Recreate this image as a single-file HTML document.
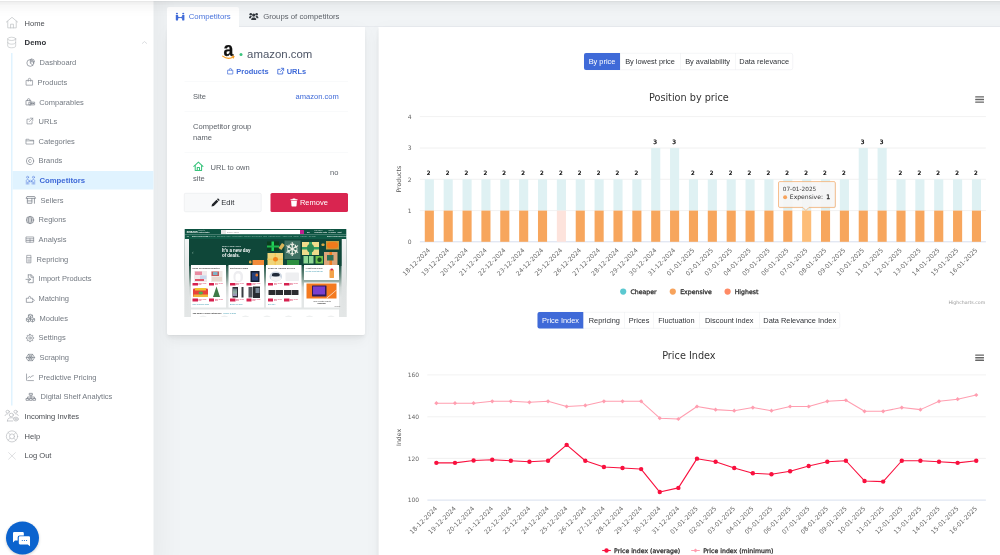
<!DOCTYPE html>
<html lang="en">
<head>
<meta charset="utf-8">
<title>Competitors - amazon.com</title>
<style>
html,body{margin:0;padding:0}
body{width:1000px;height:555px;overflow:hidden;position:relative;background:#f1f4f6;font-family:"Liberation Sans", sans-serif}
#scale{filter:saturate(1.0001);position:absolute;left:0;top:0;width:2000px;height:1110px;transform:scale(0.5);transform-origin:0 0}

#root{position:absolute;left:-40px;top:-40px;width:2080px;height:1190px;background:#f1f4f6}
#pg{position:absolute;left:40px;top:40px;width:2000px;height:1110px}
.t{position:absolute;white-space:nowrap}
.ic{position:absolute;overflow:visible}
#sidebar{position:absolute;left:-40px;top:-40px;width:346.8px;height:1190px;background:#fff;box-shadow:7.2px 0 62px rgba(0,0,0,.06)}
#sidebar>*{margin-left:40px;margin-top:40px}
#hdr{position:absolute;left:-40px;top:-80px;width:2080px;height:81.8px;background:#fff;box-shadow:0 7.8px 36.4px rgba(4,9,20,.03),0 15.6px 23.4px rgba(4,9,20,.03),0 4.2px 8.8px rgba(4,9,20,.05),0 2px 3.2px rgba(4,9,20,.03)}
.vline{position:absolute;left:22px;top:106px;width:3.2px;height:705px;background:#e0f3ff}
.active{position:absolute;left:25.2px;top:342px;width:281.6px;height:37.2px;background:#e0f3ff}
#tab1{position:absolute;left:333.8px;top:14px;width:144.6px;height:44px;background:#fff;border-radius:4px 4px 0 0}
#tabline{position:absolute;left:333.8px;top:52.6px;width:1800px;height:1.2px;background:#dde1e6}
#card1{position:absolute;left:333.8px;top:53.8px;width:396.2px;height:616.2px;background:#fff;border-radius:0 0 4px 4px;box-shadow:0 7.8px 36.4px rgba(4,9,20,.03),0 15.6px 23.4px rgba(4,9,20,.03),0 4.2px 8.8px rgba(4,9,20,.05),0 2px 3.2px rgba(4,9,20,.03)}
#card2{position:absolute;left:757.2px;top:53.8px;width:1320px;height:1160px;background:#fff;border-radius:0 0 4px 4px;box-shadow:0 7.8px 36.4px rgba(4,9,20,.03),0 15.6px 23.4px rgba(4,9,20,.03),0 4.2px 8.8px rgba(4,9,20,.05),0 2px 3.2px rgba(4,9,20,.03)}
.hr{position:absolute;height:1.1px;background:#f3f4f6}
.dot{position:absolute;border-radius:50%}
.btn{position:absolute;border-radius:3.2px;box-sizing:border-box}
.bg{position:absolute;box-sizing:border-box;border:1px solid #e9ebee;border-radius:4px;background:#fff}
.bb{position:absolute;box-sizing:border-box;text-align:center;font-size:14.8px;color:#2f3237;white-space:nowrap;border-left:1px solid #eceef1;padding-top:1.2px}
.bb.act{background:#3f6ad8;color:#fff;border-radius:4px 0 0 4px;border:none}
#charts{position:absolute;left:0;top:0;width:2000px;height:1110px;font-family:"DejaVu Sans","Liberation Sans",sans-serif}

#chat{position:absolute;left:11.6px;top:1043.4px;width:66px;height:66px;border-radius:50%;background:#0b63ce;box-shadow:0 2px 6px rgba(0,0,0,.2)}
#thumb{position:absolute;left:368.6px;top:458.2px;width:324px;height:175.8px;overflow:hidden;background:#e3e6e6}
#thumb div{position:absolute}
#thumb .w{background:#fff}
#thumb .x{white-space:nowrap}

#charts text{white-space:pre}
.ax{font-size:6.0px;fill:#666}
.xl{font-size:6.2px;fill:#666}
.dl{font-size:5.9px;fill:#000;font-weight:400;stroke:#000;stroke-width:0.24px;paint-order:stroke}
.yt{font-size:6.2px;fill:#555}
.ti{font-size:9.7px;fill:#333}
.lg{font-size:6.2px;fill:#333;stroke:#333;stroke-width:0.3px;paint-order:stroke}
.cr{font-size:4.7px;fill:#999}
.tt1{font-size:5.75px;fill:#444}
.tt2{font-size:6.1px;fill:#333}
.b{stroke:#333;stroke-width:0.3px}
</style>
</head>
<body>
<div id="scale">
<div id="root">
<div id="pg">
<div id="sidebar">
<div class="vline"></div>
<div class="active"></div>
<svg class="ic" style="left:12px;top:33.6px;width:24px;height:22.4px" viewBox="1.38 1.38 21.25 21.25" preserveAspectRatio="none" fill="none" stroke="#b9bcc0" stroke-width="1.25" stroke-linecap="round" stroke-linejoin="round"><path d="M2 11 12 2l10 9"/><path d="M4.5 9.5V22h15V9.5"/><path d="M9.5 22v-7h5v7"/></svg>
<div class="t " style="left:49.2px;top:34.2px;font-size:15.1px;line-height:24px;color:#4a4d52;">Home</div>
<svg class="ic" style="left:14.4px;top:73.6px;width:18.8px;height:22px" viewBox="1.38 1.38 21.25 21.25" preserveAspectRatio="none" fill="none" stroke="#b9bcc0" stroke-width="1.25" stroke-linecap="round" stroke-linejoin="round"><ellipse cx="12" cy="5" rx="9" ry="3.2"/><path d="M3 5v14c0 1.8 4 3.2 9 3.2s9-1.4 9-3.2V5"/><path d="M3 12c0 1.8 4 3.2 9 3.2s9-1.4 9-3.2"/></svg>
<div class="t " style="left:49.2px;top:73.4px;font-size:15.5px;line-height:24px;color:#2f3237;font-weight:700;">Demo</div>
<svg class="ic" style="left:10px;top:820.4px;width:28px;height:23.2px" viewBox="1.38 1.38 21.25 21.25" preserveAspectRatio="none" fill="none" stroke="#b9bcc0" stroke-width="1.25" stroke-linecap="round" stroke-linejoin="round"><circle cx="5.500" cy="4.500" r="2.600"/><circle cx="17.500" cy="4.500" r="2.600"/><circle cx="11" cy="10.500" r="3.200"/><path d="M1.500 11.500c.5-2.500 2.500-3 4-3M21.500 11.500c-.5-2.500-2.500-3-4-3"/><path d="M5 21.500c0-4.500 2.500-6 6-6 1.500 0 2.800.3 3.800 1"/><path d="M5 21.500h8"/><circle cx="18" cy="18" r="3.600"/><path d="M18 16.200v3.600M16.200 18h3.600"/></svg>
<div class="t " style="left:49.2px;top:820.6px;font-size:15.1px;line-height:24px;color:#4a4d52;">Incoming Invites</div>
<svg class="ic" style="left:12px;top:860.8px;width:24px;height:23.6px" viewBox="1.38 1.38 21.25 21.25" preserveAspectRatio="none" fill="none" stroke="#b9bcc0" stroke-width="1.25" stroke-linecap="round" stroke-linejoin="round"><circle cx="12" cy="12" r="10"/><circle cx="12" cy="12" r="4.500"/><path d="M5 5l3.800 3.800M19 5l-3.800 3.800M5 19l3.800-3.800M19 19l-3.800-3.800"/></svg>
<div class="t " style="left:49.2px;top:860.2px;font-size:15.1px;line-height:24px;color:#4a4d52;">Help</div>
<svg class="ic" style="left:16px;top:904px;width:16px;height:15.6px" viewBox="1.38 1.38 21.25 21.25" preserveAspectRatio="none" fill="none" stroke="#b9bcc0" stroke-width="1.25" stroke-linecap="round" stroke-linejoin="round"><path d="M3 3l18 18M21 3L3 21"/></svg>
<div class="t " style="left:49.2px;top:899.4px;font-size:15.1px;line-height:24px;color:#4a4d52;">Log Out</div>
<svg class="ic" style="left:283.8px;top:82.4px;width:10px;height:6px" viewBox="0 0 16 8" fill="none" stroke="#b8bcc2" stroke-width="1.6" stroke-linecap="round" stroke-linejoin="round" ><path d="M1 7l7-6 7 6"/></svg>
<svg class="ic" style="left:53.2px;top:117.2px;width:16.8px;height:16.4px" viewBox="1.05 1.05 21.90 21.90" preserveAspectRatio="none" fill="none" stroke="#7f858e" stroke-width="1.9" stroke-linecap="round" stroke-linejoin="round"><circle cx="11" cy="13" r="9"/><path d="M11 13V4"/><path d="M11 13l6.5 6"/><path d="M14 2a8 8 0 0 1 8 8h-8z"/></svg>
<div class="t " style="left:79.2px;top:113.2px;font-size:15px;line-height:24px;color:#747a82;">Dashboard</div>
<svg class="ic" style="left:52px;top:156.4px;width:14px;height:15.4px" viewBox="1.05 1.05 21.90 21.90" preserveAspectRatio="none" fill="none" stroke="#7f858e" stroke-width="1.9" stroke-linecap="round" stroke-linejoin="round"><path d="M2.500 8h19v13.500h-19z"/><path d="M8 10.500V6a4 4 0 0 1 8 0v4.500"/></svg>
<div class="t " style="left:75.2px;top:152.2px;font-size:15px;line-height:24px;color:#747a82;">Products</div>
<svg class="ic" style="left:52px;top:196px;width:18px;height:15.2px" viewBox="1.05 1.05 21.90 21.90" preserveAspectRatio="none" fill="none" stroke="#7f858e" stroke-width="1.9" stroke-linecap="round" stroke-linejoin="round"><path d="M2 8.500h11v12.500H2z"/><path d="M4.500 8.500V6a3 3 0 0 1 6 0v2.500"/><path d="M9 13h13v8H9z"/><circle cx="13.500" cy="17" r="1.500"/><circle cx="18" cy="17" r="1.500"/></svg>
<div class="t " style="left:78.4px;top:191.8px;font-size:15px;line-height:24px;color:#747a82;">Comparables</div>
<svg class="ic" style="left:52px;top:235.2px;width:14.8px;height:14.8px" viewBox="1.05 1.05 21.90 21.90" preserveAspectRatio="none" fill="none" stroke="#7f858e" stroke-width="1.9" stroke-linecap="round" stroke-linejoin="round"><path d="M19 13v7H4V6h7"/><path d="M14 3h7v7"/><path d="M21 3 11 13"/></svg>
<div class="t " style="left:77.2px;top:230.8px;font-size:15px;line-height:24px;color:#747a82;">URLs</div>
<svg class="ic" style="left:52px;top:275.6px;width:16px;height:14px" viewBox="1.05 1.05 21.90 21.90" preserveAspectRatio="none" fill="none" stroke="#7f858e" stroke-width="1.9" stroke-linecap="round" stroke-linejoin="round"><path d="M2 5h7l2 3h11v12H2z"/><path d="M2 10h20"/></svg>
<div class="t " style="left:77.2px;top:270.2px;font-size:15px;line-height:24px;color:#747a82;">Categories</div>
<svg class="ic" style="left:52px;top:313.8px;width:16px;height:16px" viewBox="1.05 1.05 21.90 21.90" preserveAspectRatio="none" fill="none" stroke="#7f858e" stroke-width="1.9" stroke-linecap="round" stroke-linejoin="round"><circle cx="12" cy="12" r="10"/><path d="M15.500 9.500a4.200 4.200 0 1 0 0 5"/></svg>
<div class="t " style="left:77.2px;top:309.4px;font-size:15px;line-height:24px;color:#747a82;">Brands</div>
<svg class="ic" style="left:52px;top:352.4px;width:18px;height:16.8px" viewBox="1.30 1.30 21.40 21.40" preserveAspectRatio="none" fill="none" stroke="#5a82e0" stroke-width="1.4" stroke-linecap="round" stroke-linejoin="round"><circle cx="5" cy="4.500" r="2.500"/><circle cx="19" cy="4.500" r="2.500"/><path d="M2 22v-9.500c0-3 6-3 6 0V22M5 17v5"/><path d="M16 22v-9.500c0-3 6-3 6 0V22M19 17v5"/><path d="M9 14.500h6"/><path d="M10.500 12.700l-1.800 1.800 1.800 1.800"/><path d="M13.500 12.700l1.800 1.800-1.800 1.800"/></svg>
<div class="t " style="left:78.8px;top:348.8px;font-size:15.5px;line-height:24px;color:#3f6ad8;font-weight:700;">Competitors</div>
<svg class="ic" style="left:52px;top:392.4px;width:20px;height:16px" viewBox="1.05 1.05 21.90 21.90" preserveAspectRatio="none" fill="none" stroke="#7f858e" stroke-width="1.9" stroke-linecap="round" stroke-linejoin="round"><path d="M4 2.500h16l2 5H2z"/><path d="M4 7.500V21h10V7.500"/><path d="M4 14.500h10"/><path d="M19.500 7.500V21"/></svg>
<div class="t " style="left:81.2px;top:388.2px;font-size:15px;line-height:24px;color:#747a82;">Sellers</div>
<svg class="ic" style="left:52px;top:431.8px;width:16px;height:16px" viewBox="1.05 1.05 21.90 21.90" preserveAspectRatio="none" fill="none" stroke="#7f858e" stroke-width="1.9" stroke-linecap="round" stroke-linejoin="round"><circle cx="12" cy="12" r="10"/><path d="M2 12h20"/><ellipse cx="12" cy="12" rx="4.500" ry="10"/><path d="M4 6.500h16M4 17.500h16"/></svg>
<div class="t " style="left:77.2px;top:427.4px;font-size:15px;line-height:24px;color:#747a82;">Regions</div>
<svg class="ic" style="left:52px;top:472px;width:16px;height:14.4px" viewBox="1.05 1.05 21.90 21.90" preserveAspectRatio="none" fill="none" stroke="#7f858e" stroke-width="1.9" stroke-linecap="round" stroke-linejoin="round"><path d="M2 4h20v16H2z"/><path d="M2 9.500h20M2 14.700h20M12 9.500V20"/></svg>
<div class="t " style="left:77.2px;top:466.8px;font-size:15px;line-height:24px;color:#747a82;">Analysis</div>
<svg class="ic" style="left:52px;top:510px;width:12px;height:16.4px" viewBox="1.05 1.05 21.90 21.90" preserveAspectRatio="none" fill="none" stroke="#7f858e" stroke-width="1.9" stroke-linecap="round" stroke-linejoin="round"><path d="M5 2h14v20H5z"/><path d="M5 8h14"/><path d="M8.500 12h.1M12 12h.1M15.500 12h.1M8.500 15.500h.1M12 15.500h.1M15.500 15.500h.1M8.500 19h.1M12 19h.1M15.500 19h.1"/></svg>
<div class="t " style="left:73.2px;top:506.2px;font-size:15px;line-height:24px;color:#747a82;">Repricing</div>
<svg class="ic" style="left:52px;top:548.8px;width:16.8px;height:17.2px" viewBox="1.05 1.05 21.90 21.90" preserveAspectRatio="none" fill="none" stroke="#7f858e" stroke-width="1.9" stroke-linecap="round" stroke-linejoin="round"><path d="M7 2h8l5 5v15H7v-6"/><path d="M7 10V2"/><path d="M14 2v6h6"/><path d="M1 13.500h12"/><path d="M10 10.500l3 3-3 3"/></svg>
<div class="t " style="left:77.2px;top:545.4px;font-size:15px;line-height:24px;color:#747a82;">Import Products</div>
<svg class="ic" style="left:52px;top:588.8px;width:16.8px;height:16.4px" viewBox="1.05 1.05 21.90 21.90" preserveAspectRatio="none" fill="none" stroke="#7f858e" stroke-width="1.9" stroke-linecap="round" stroke-linejoin="round"><path d="M3 11h5.500c-1.500-2.500-.5-5 2-5s3.500 2.500 2 5H18v4c2.500-1.500 4.500-.5 4.500 1.500S20.500 20 18 18.500V22H3z"/></svg>
<div class="t " style="left:77.2px;top:584.6px;font-size:15px;line-height:24px;color:#747a82;">Matching</div>
<svg class="ic" style="left:52px;top:628px;width:18px;height:16.4px" viewBox="1.05 1.05 21.90 21.90" preserveAspectRatio="none" fill="none" stroke="#7f858e" stroke-width="1.9" stroke-linecap="round" stroke-linejoin="round"><path d="M12 2l5 2.500v5.500l-5 2.500-5-2.500V4.500z"/><path d="M7 4.500l5 2.500 5-2.500M12 7v5.500"/><path d="M7 11.500l5 2.500v5.500L7 22l-5-2.500V14z"/><path d="M2 14l5 2.500 5-2.500M7 16.500V22"/><path d="M17 11.500l5 2.500v5.500L17 22l-5-2.500"/><path d="M12 14l5 2.500 5-2.500M17 16.500V22"/></svg>
<div class="t " style="left:79.2px;top:624px;font-size:15px;line-height:24px;color:#747a82;">Modules</div>
<svg class="ic" style="left:52px;top:667.6px;width:16px;height:16px" viewBox="1.05 1.05 21.90 21.90" preserveAspectRatio="none" fill="none" stroke="#7f858e" stroke-width="1.9" stroke-linecap="round" stroke-linejoin="round"><path d="M10.28 2.15L13.72 2.15L13.80 4.51L16.02 5.43L17.75 3.82L20.18 6.25L18.57 7.98L19.49 10.20L21.85 10.28L21.85 13.72L19.49 13.80L18.57 16.02L20.18 17.75L17.75 20.18L16.02 18.57L13.80 19.49L13.72 21.85L10.28 21.85L10.20 19.49L7.98 18.57L6.25 20.18L3.82 17.75L5.43 16.02L4.51 13.80L2.15 13.72L2.15 10.28L4.51 10.20L5.43 7.98L3.82 6.25L6.25 3.82L7.98 5.43L10.20 4.51z"/><circle cx="12" cy="12" r="3.3"/></svg>
<div class="t " style="left:77.2px;top:663.2px;font-size:15px;line-height:24px;color:#747a82;">Settings</div>
<svg class="ic" style="left:52px;top:707.2px;width:18px;height:16px" viewBox="1.05 1.05 21.90 21.90" preserveAspectRatio="none" fill="none" stroke="#7f858e" stroke-width="1.9" stroke-linecap="round" stroke-linejoin="round"><path d="M2 12 7 3.300h10L22 12l-5 8.700H7z"/><path d="M7 12l2.500-4.350h5L17 12l-2.500 4.350h-5z"/><path d="M2 12h20M7 3.300l10 17.400M17 3.300 7 20.700"/></svg>
<div class="t " style="left:78.8px;top:702.6px;font-size:15px;line-height:24px;color:#747a82;">Scraping</div>
<svg class="ic" style="left:52px;top:746.8px;width:16px;height:15.2px" viewBox="1.05 1.05 21.90 21.90" preserveAspectRatio="none" fill="none" stroke="#7f858e" stroke-width="1.9" stroke-linecap="round" stroke-linejoin="round"><path d="M2.500 2.500v18"/><path d="M5.500 21.500h16"/><path d="M6 14l4-4.500 3.500 3 3-4 4.500-1"/></svg>
<div class="t " style="left:77.2px;top:741.8px;font-size:15px;line-height:24px;color:#747a82;">Predictive Pricing</div>
<svg class="ic" style="left:52px;top:785.6px;width:20px;height:16px" viewBox="1.05 1.05 21.90 21.90" preserveAspectRatio="none" fill="none" stroke="#7f858e" stroke-width="1.9" stroke-linecap="round" stroke-linejoin="round"><path d="M9 2h6v5H9z"/><path d="M2 16h5v5H2zM9.500 16h5v5h-5zM17 16h5v5h-5z"/><path d="M12 7v9M4.500 16v-4h15v4"/></svg>
<div class="t " style="left:81.2px;top:781.2px;font-size:15px;line-height:24px;color:#747a82;">Digital Shelf Analytics</div>
</div>
<div id="tabline"></div>
<div id="card1"></div>
<div id="tab1"></div>
<svg class="ic" style="left:351.2px;top:25px;width:18.4px;height:16.4px" viewBox="0 0 9.2 8.2" fill="#3f6ad8" stroke="none"><ellipse cx="1.45" cy="0.95" rx="1.05" ry="0.8"/><ellipse cx="7.75" cy="0.95" rx="1.05" ry="0.8"/><rect x="0.3" y="2.15" width="2.3" height="5.95" rx="0.9"/><rect x="6.600" y="2.15" width="2.3" height="5.95" rx="0.9"/><path d="M2.500 4.600h4.200v0.950H2.500z"/><path d="M2.400 5.080l1.150-1.250v2.500zM6.800 5.080l-1.150-1.250v2.500z"/></svg>
<div class="t " style="left:377.4px;top:21.4px;font-size:15.6px;line-height:24px;color:#4a74dc;">Competitors</div>
<svg class="ic" style="left:498.4px;top:25px;width:18.8px;height:15px" viewBox="0 0 24 19" fill="#343a40" stroke="none" stroke-width="1.6" stroke-linecap="round" stroke-linejoin="round" ><circle cx="4.500" cy="4.500" r="3.300"/><circle cx="19.500" cy="4.500" r="3.300"/><circle cx="12" cy="6.500" r="4.200"/><path d="M0 13.500c0-3.600 3-4.500 5-4.500 1 0 2 .3 2.600.8-1.800 1.200-2.600 2.700-2.600 4.500v.2H0zM24 13.500c0-3.600-3-4.500-5-4.500-1 0-2 .3-2.600.8 1.800 1.200 2.600 2.700 2.600 4.500v.2h5zM5.500 19c0-5 3-6.500 6.500-6.500s6.500 1.500 6.500 6.500z"/></svg>
<div class="t " style="left:526.4px;top:21.4px;font-size:15.5px;line-height:24px;color:#5d6269;">Groups of competitors</div>
<div class="t" style="left:446.6px;top:79.2px;font-size:39.2px;line-height:39.2px;font-weight:700;color:#111;-webkit-text-stroke:0.5px #111;transform:scaleX(0.9);transform-origin:0 0">a</div>
<svg class="ic" style="left:442.8px;top:109.6px;width:27.2px;height:8.8px" viewBox="0 0 30 10" fill="none" stroke="#f79a1c" stroke-width="2.4" stroke-linecap="round"><path d="M2 2.500c8 6 18 6 25 1.500"/><path d="M24 2.200l4 1.200-1.800 3.600"/></svg>
<div class="dot" style="left:479px;top:106px;width:6.4px;height:6.4px;background:#3ac47d"></div>
<div class="t " style="left:494.2px;top:90.8px;font-size:22.8px;line-height:32px;color:#4d5566;">amazon.com</div>
<svg class="ic" style="left:454px;top:135.2px;width:13.6px;height:15.2px" viewBox="0 0 24 24" fill="none" stroke="#3f6ad8" stroke-width="2.4" stroke-linecap="round" stroke-linejoin="round" ><path d="M3.500 8h17v13.500h-17z"/><path d="M8 8V6a4 4 0 0 1 8 0v2"/></svg>
<div class="t " style="left:472.6px;top:131px;font-size:14.9px;line-height:24px;color:#3f6ad8;font-weight:700;">Products</div>
<svg class="ic" style="left:554px;top:135.2px;width:14.8px;height:14.8px" viewBox="0 0 24 24" fill="none" stroke="#3f6ad8" stroke-width="2.8" stroke-linecap="round" stroke-linejoin="round" ><path d="M18.500 14v7h-16V6h7"/><path d="M14 2.500h7.500V10"/><path d="M21 3 11 13"/></svg>
<div class="t " style="left:573.4px;top:131px;font-size:14.9px;line-height:24px;color:#3f6ad8;font-weight:700;">URLs</div>
<div class="hr" style="left:368.6px;top:162.3px;width:327.2px"></div>
<div class="hr" style="left:368.6px;top:222.1px;width:327.2px"></div>
<div class="hr" style="left:368.6px;top:303.7px;width:327.2px"></div>
<div class="t " style="left:386px;top:180.6px;font-size:15.1px;line-height:24px;color:#5d6269;">Site</div>
<div class="t " style="right:1322.6px;top:180.6px;font-size:15.1px;line-height:24px;color:#3f6ad8;">amazon.com</div>
<div class="t " style="left:386px;top:240.8px;font-size:15.1px;line-height:24px;color:#5d6269;">Competitor group</div>
<div class="t " style="left:386px;top:263.2px;font-size:15.1px;line-height:24px;color:#5d6269;">name</div>
<svg class="ic" style="left:385px;top:321.6px;width:23.6px;height:21.8px" viewBox="0 0 24 24" fill="none" stroke="#3ac47d" stroke-width="2.3" stroke-linecap="round" stroke-linejoin="round" ><path d="M2 12 12 2.500l10 9.500"/><path d="M5 10v11h14V10"/><path d="M9.500 21v-6.500h5V21"/></svg>
<div class="t " style="left:421.2px;top:322.8px;font-size:15.1px;line-height:24px;color:#5d6269;">URL to own</div>
<div class="t " style="left:386px;top:345.4px;font-size:15.1px;line-height:24px;color:#5d6269;">site</div>
<div class="t " style="right:1323.2px;top:333.4px;font-size:15.1px;line-height:24px;color:#5d6269;">no</div>
<div class="btn" style="left:368.4px;top:386px;width:154.8px;height:37.6px;background:#f8f9fa;border:1px solid #e4e6e9"></div>
<svg class="ic" style="left:422.6px;top:396.8px;width:16px;height:16px" viewBox="0 0 24 24" fill="#212529" stroke="none" stroke-width="1.6" stroke-linecap="round" stroke-linejoin="round" ><path d="M0 24l1.500-7L15 3.500l5.500 5.500L7 22.500zM16.500 2l1.800-1.800a1.500 1.500 0 0 1 2 0l3.500 3.500a1.500 1.500 0 0 1 0 2L22 7.500z"/></svg>
<div class="t " style="left:442.6px;top:392.2px;font-size:15.2px;line-height:24px;color:#2d3035;">Edit</div>
<div class="btn" style="left:540.8px;top:386px;width:154.8px;height:37.6px;background:#d92550"></div>
<svg class="ic" style="left:581.4px;top:396px;width:14px;height:17.2px" viewBox="0 0 24 28" fill="#fff" stroke="none" stroke-width="1.6" stroke-linecap="round" stroke-linejoin="round" ><path d="M0 3.500h6.500L8 1h8l1.500 2.500H24V7H0z"/><path d="M2 9h20l-1.300 17a2 2 0 0 1-2 2H5.300a2 2 0 0 1-2-2z"/></svg>
<div class="t " style="left:599.8px;top:392.2px;font-size:15px;line-height:24px;color:#fff;">Remove</div>
<div id="thumb">
<div style="left:0px;top:19.6px;width:324px;height:156.2px;background:linear-gradient(#0f4739 0,#0f4739 30%,#6f8f84 48%,#cfd6d4 62%,#e3e6e6 75%);"></div>
<div style="left:0px;top:19.6px;width:9.4px;height:156.2px;background:linear-gradient(#f4f5f5,#dfe2e2 60%,#e3e6e6);"></div>
<div style="left:314.6px;top:19.6px;width:9.4px;height:156.2px;background:linear-gradient(#f4f5f5,#dfe2e2 60%,#e3e6e6);"></div>
<div style="left:0px;top:0px;width:324px;height:10.8px;background:#0d5241;"></div>
<div style="left:0px;top:10.8px;width:324px;height:9px;background:#0f5946;"></div>
<div class="x" style="left:4px;top:1.38px;font-size:6.38px;line-height:7.66px;color:#fff;font-weight:700;transform:scaleX(0.94);transform-origin:0 50%;">amazon</div>
<div class="x" style="left:28.6px;top:2.08px;font-size:3.2px;line-height:3.82px;color:#cfe0da;font-weight:400;transform:scaleX(0.94);transform-origin:0 50%;">Deliver to</div>
<div class="x" style="left:28.6px;top:5.02px;font-size:3.62px;line-height:4.34px;color:#fff;font-weight:700;transform:scaleX(0.94);transform-origin:0 50%;">United States</div>
<div style="left:73.2px;top:2.2px;width:158.2px;height:7.6px;background:#fff;border-radius:1px 0 0 1px"></div>
<div style="left:73.2px;top:2.2px;width:10.2px;height:7.6px;background:#e6e6e6;border-radius:1px 0 0 1px"></div>
<div class="x" style="left:85.4px;top:3.82px;font-size:3.62px;line-height:4.34px;color:#888;font-weight:400;transform:scaleX(0.94);transform-origin:0 50%;">Search Amazon</div>
<div style="left:231px;top:2.2px;width:8.8px;height:7.6px;background:#c2208f;border-radius:0 1px 1px 0"></div>
<div class="x" style="left:245.4px;top:3.5px;font-size:3.82px;line-height:4.6px;color:#fff;font-weight:700;transform:scaleX(0.94);transform-origin:0 50%;">EN</div>
<div class="x" style="left:259.4px;top:2.28px;font-size:3.2px;line-height:3.82px;color:#dbe8e3;font-weight:400;transform:scaleX(0.94);transform-origin:0 50%;">Hello, sign in</div>
<div class="x" style="left:259.4px;top:5.22px;font-size:3.62px;line-height:4.34px;color:#fff;font-weight:700;transform:scaleX(0.94);transform-origin:0 50%;">Account &amp; Lists</div>
<div class="x" style="left:288.6px;top:2.28px;font-size:3.2px;line-height:3.82px;color:#dbe8e3;font-weight:400;transform:scaleX(0.94);transform-origin:0 50%;">Returns</div>
<div class="x" style="left:288.6px;top:5.22px;font-size:3.62px;line-height:4.34px;color:#fff;font-weight:700;transform:scaleX(0.94);transform-origin:0 50%;">&amp; Orders</div>
<div class="x" style="left:306.6px;top:3.98px;font-size:4.04px;line-height:4.86px;color:#fff;font-weight:700;transform:scaleX(0.94);transform-origin:0 50%;">Cart</div>
<div class="x" style="left:4.2px;top:13.1px;font-size:3.82px;line-height:4.6px;color:#fff;font-weight:700;transform:scaleX(0.94);transform-origin:0 50%;">All</div>
<div class="x" style="left:15.4px;top:13.1px;font-size:3.82px;line-height:4.6px;color:rgba(255,255,255,.85);font-weight:700;transform:scaleX(0.94);transform-origin:0 50%;">Black Friday Deals</div>
<div class="x" style="left:44.6px;top:13.42px;font-size:3.3px;line-height:3.96px;color:rgba(255,255,255,.5);font-weight:400;transform:scaleX(0.94);transform-origin:0 50%;">Medical Care &nbsp; Best Sellers &nbsp; Prime &nbsp; Amazon Basics &nbsp; Groceries &nbsp; New Releases &nbsp; Music &nbsp; Customer Service &nbsp; Amazon Home &nbsp; Registry &nbsp; Pharmacy &nbsp; Gift Cards</div>
<div class="x" style="left:285.4px;top:13.1px;font-size:3.82px;line-height:4.6px;color:rgba(255,255,255,.85);font-weight:700;transform:scaleX(0.94);transform-origin:0 50%;">Black Friday Week is on</div>
<div style="left:9.4px;top:19.8px;width:305.2px;height:54px;background:#0f4739;"></div>
<div class="x" style="left:15.4px;top:39.42px;font-size:10.64px;line-height:12.76px;color:#7fa597;font-weight:400;transform:scaleX(0.94);transform-origin:0 50%;">&#8249;</div>
<div class="x" style="left:75.4px;top:31.66px;font-size:4.58px;line-height:5.48px;color:rgba(255,255,255,.8);font-weight:700;transform:scaleX(0.94);transform-origin:0 50%;">Black Friday Week</div>
<div class="x" style="left:75.2px;top:36.92px;font-size:10.48px;line-height:12.58px;color:#fff;font-weight:700;transform:scaleX(0.84);transform-origin:0 50%;">It's a new day</div>
<div class="x" style="left:75.2px;top:46.32px;font-size:10.48px;line-height:12.58px;color:#fff;font-weight:700;transform:scaleX(0.84);transform-origin:0 50%;">of deals.</div>
<div style="left:165px;top:25.2px;width:24.4px;height:19px;background:#0b3f1f;"></div>
<div style="left:174.6px;top:25.2px;width:4.8px;height:19px;background:#1fd35a;"></div>
<div style="left:165px;top:32.6px;width:24.4px;height:4px;background:#1fb84e;"></div>
<div style="left:191.4px;top:29px;width:7.2px;height:11.6px;background:#d9b45a;transform:rotate(35deg)"></div>
<div style="left:166.8px;top:48.2px;width:31px;height:23.6px;background:#efd57a;"></div>
<div style="left:180.6px;top:48.2px;width:3.2px;height:23.6px;background:#f3c95a;"></div>
<div style="left:166.8px;top:58.6px;width:31px;height:2.8px;background:#f3c95a;"></div>
<div style="left:177.4px;top:55.4px;width:9.6px;height:9.2px;background:#f0841e;border-radius:50%"></div>
<div style="left:200.4px;top:22.4px;width:31.8px;height:37px;background:#3e6f61;"></div>
<div class="x" style="left:200.4px;top:22px;width:31.8px;height:37px;line-height:37px;text-align:center;font-size:38px;color:#f1f2e8;font-family:&quot;DejaVu Sans&quot;,sans-serif">&#10052;</div>
<div style="left:205.4px;top:62.2px;width:23.6px;height:9.6px;background:#2c8f3f;"></div>
<div style="left:235.2px;top:25.6px;width:34.2px;height:25.8px;background:#efdc8c;"></div>
<div style="left:249.4px;top:25.6px;width:6px;height:25.8px;background:#2f9e63;"></div>
<div style="left:235.2px;top:36.2px;width:34.2px;height:4.8px;background:#2f9e63;"></div>
<div style="left:245.4px;top:30.2px;width:14px;height:16.4px;background:#2a8a55;border-radius:50%"></div>
<div style="left:238.8px;top:53.8px;width:19.8px;height:14.8px;background:#8fd896;"></div>
<div style="left:247.8px;top:53.8px;width:2px;height:14.8px;background:#1f6a3c;"></div>
<div style="left:262.8px;top:53.8px;width:14.6px;height:14.8px;background:#6cc04a;"></div>
<div style="left:266.2px;top:57px;width:8px;height:8.4px;background:#174d25;border-radius:40%"></div>
<div style="left:283.8px;top:23.8px;width:26px;height:17.2px;background:#c99a3c;"></div>
<div style="left:285.8px;top:25.8px;width:22px;height:13.2px;background:#f07a1c;border-radius:40%"></div>
<div style="left:274.6px;top:29px;width:5.6px;height:5.2px;background:#d8a846;border-radius:30%"></div>
<div style="left:279.6px;top:45.8px;width:26.6px;height:26px;background:#dba57a;"></div>
<div style="left:290.6px;top:45.8px;width:4.4px;height:26px;background:#f07a1c;"></div>
<div style="left:285.8px;top:51.4px;width:12.8px;height:11.2px;background:#2f6f57;"></div>
<div style="left:136.2px;top:61.4px;width:23.6px;height:10.4px;background:#f28a3a;"></div>
<div style="left:129px;top:62.6px;width:5.6px;height:6px;background:#d8a846;border-radius:40%"></div>
<div style="left:310.6px;top:25px;width:1.6px;height:8px;background:#0b3d2e;"></div>
<div style="left:13.2px;top:71.8px;width:70.6px;height:85px;background:#fff;"></div>
<div style="left:88px;top:71.8px;width:71.4px;height:85px;background:#fff;"></div>
<div style="left:163.6px;top:71.8px;width:71px;height:85px;background:#fff;"></div>
<div style="left:239.2px;top:71.8px;width:70px;height:30.4px;background:#fff;"></div>
<div style="left:239.2px;top:106.6px;width:70px;height:50.2px;background:#fff;"></div>
<div class="x" style="left:16.8px;top:75.4px;font-size:4.68px;line-height:5.62px;color:#444;font-weight:700;transform:scaleX(0.94);transform-origin:0 50%;">Deals on holiday favorites</div>
<div class="x" style="left:91.6px;top:75.4px;font-size:4.68px;line-height:5.62px;color:#444;font-weight:700;transform:scaleX(0.94);transform-origin:0 50%;">Electronics deals</div>
<div class="x" style="left:167.2px;top:75.4px;font-size:4.68px;line-height:5.62px;color:#444;font-weight:700;transform:scaleX(0.94);transform-origin:0 50%;">Deals on Amazon Devices</div>
<div class="x" style="left:242.8px;top:75.4px;font-size:4.68px;line-height:5.62px;color:#444;font-weight:700;transform:scaleX(0.94);transform-origin:0 50%;">A gift they'll love</div>
<div style="left:16.8px;top:107.6px;width:10.4px;height:5.2px;background:#d6214f;border-radius:0.6px"></div>
<div class="x" style="left:28.8px;top:107.14px;font-size:3.08px;line-height:3.7px;color:#d6214f;font-weight:400;transform:scaleX(0.94);transform-origin:0 50%;">Black Friday</div>
<div class="x" style="left:28.8px;top:109.74px;font-size:3.08px;line-height:3.7px;color:#d6214f;font-weight:400;transform:scaleX(0.94);transform-origin:0 50%;">Deal</div>
<div style="left:16.8px;top:139.2px;width:10.4px;height:5.2px;background:#d6214f;border-radius:0.6px"></div>
<div class="x" style="left:28.8px;top:138.74px;font-size:3.08px;line-height:3.7px;color:#d6214f;font-weight:400;transform:scaleX(0.94);transform-origin:0 50%;">Black Friday</div>
<div class="x" style="left:28.8px;top:141.34px;font-size:3.08px;line-height:3.7px;color:#d6214f;font-weight:400;transform:scaleX(0.94);transform-origin:0 50%;">Deal</div>
<div style="left:49.2px;top:107.6px;width:10.4px;height:5.2px;background:#d6214f;border-radius:0.6px"></div>
<div class="x" style="left:61.2px;top:107.14px;font-size:3.08px;line-height:3.7px;color:#d6214f;font-weight:400;transform:scaleX(0.94);transform-origin:0 50%;">Black Friday</div>
<div class="x" style="left:61.2px;top:109.74px;font-size:3.08px;line-height:3.7px;color:#d6214f;font-weight:400;transform:scaleX(0.94);transform-origin:0 50%;">Deal</div>
<div style="left:49.2px;top:139.2px;width:10.4px;height:5.2px;background:#d6214f;border-radius:0.6px"></div>
<div class="x" style="left:61.2px;top:138.74px;font-size:3.08px;line-height:3.7px;color:#d6214f;font-weight:400;transform:scaleX(0.94);transform-origin:0 50%;">Black Friday</div>
<div class="x" style="left:61.2px;top:141.34px;font-size:3.08px;line-height:3.7px;color:#d6214f;font-weight:400;transform:scaleX(0.94);transform-origin:0 50%;">Deal</div>
<div style="left:91.6px;top:107.6px;width:10.4px;height:5.2px;background:#d6214f;border-radius:0.6px"></div>
<div class="x" style="left:103.6px;top:107.14px;font-size:3.08px;line-height:3.7px;color:#d6214f;font-weight:400;transform:scaleX(0.94);transform-origin:0 50%;">Black Friday</div>
<div class="x" style="left:103.6px;top:109.74px;font-size:3.08px;line-height:3.7px;color:#d6214f;font-weight:400;transform:scaleX(0.94);transform-origin:0 50%;">Deal</div>
<div style="left:91.6px;top:139.2px;width:10.4px;height:5.2px;background:#d6214f;border-radius:0.6px"></div>
<div class="x" style="left:103.6px;top:138.74px;font-size:3.08px;line-height:3.7px;color:#d6214f;font-weight:400;transform:scaleX(0.94);transform-origin:0 50%;">Black Friday</div>
<div class="x" style="left:103.6px;top:141.34px;font-size:3.08px;line-height:3.7px;color:#d6214f;font-weight:400;transform:scaleX(0.94);transform-origin:0 50%;">Deal</div>
<div style="left:124px;top:107.6px;width:10.4px;height:5.2px;background:#d6214f;border-radius:0.6px"></div>
<div class="x" style="left:136px;top:107.14px;font-size:3.08px;line-height:3.7px;color:#d6214f;font-weight:400;transform:scaleX(0.94);transform-origin:0 50%;">Black Friday</div>
<div class="x" style="left:136px;top:109.74px;font-size:3.08px;line-height:3.7px;color:#d6214f;font-weight:400;transform:scaleX(0.94);transform-origin:0 50%;">Deal</div>
<div style="left:124px;top:139.2px;width:10.4px;height:5.2px;background:#d6214f;border-radius:0.6px"></div>
<div class="x" style="left:136px;top:138.74px;font-size:3.08px;line-height:3.7px;color:#d6214f;font-weight:400;transform:scaleX(0.94);transform-origin:0 50%;">Black Friday</div>
<div class="x" style="left:136px;top:141.34px;font-size:3.08px;line-height:3.7px;color:#d6214f;font-weight:400;transform:scaleX(0.94);transform-origin:0 50%;">Deal</div>
<div style="left:167.2px;top:107.6px;width:10.4px;height:5.2px;background:#d6214f;border-radius:0.6px"></div>
<div class="x" style="left:179.2px;top:107.14px;font-size:3.08px;line-height:3.7px;color:#d6214f;font-weight:400;transform:scaleX(0.94);transform-origin:0 50%;">Black Friday</div>
<div class="x" style="left:179.2px;top:109.74px;font-size:3.08px;line-height:3.7px;color:#d6214f;font-weight:400;transform:scaleX(0.94);transform-origin:0 50%;">Deal</div>
<div style="left:167.2px;top:139.2px;width:10.4px;height:5.2px;background:#d6214f;border-radius:0.6px"></div>
<div class="x" style="left:179.2px;top:138.74px;font-size:3.08px;line-height:3.7px;color:#d6214f;font-weight:400;transform:scaleX(0.94);transform-origin:0 50%;">Black Friday</div>
<div class="x" style="left:179.2px;top:141.34px;font-size:3.08px;line-height:3.7px;color:#d6214f;font-weight:400;transform:scaleX(0.94);transform-origin:0 50%;">Deal</div>
<div style="left:199.6px;top:107.6px;width:10.4px;height:5.2px;background:#d6214f;border-radius:0.6px"></div>
<div class="x" style="left:211.6px;top:107.14px;font-size:3.08px;line-height:3.7px;color:#d6214f;font-weight:400;transform:scaleX(0.94);transform-origin:0 50%;">Black Friday</div>
<div class="x" style="left:211.6px;top:109.74px;font-size:3.08px;line-height:3.7px;color:#d6214f;font-weight:400;transform:scaleX(0.94);transform-origin:0 50%;">Deal</div>
<div style="left:199.6px;top:139.2px;width:10.4px;height:5.2px;background:#d6214f;border-radius:0.6px"></div>
<div class="x" style="left:211.6px;top:138.74px;font-size:3.08px;line-height:3.7px;color:#d6214f;font-weight:400;transform:scaleX(0.94);transform-origin:0 50%;">Black Friday</div>
<div class="x" style="left:211.6px;top:141.34px;font-size:3.08px;line-height:3.7px;color:#d6214f;font-weight:400;transform:scaleX(0.94);transform-origin:0 50%;">Deal</div>
<div class="x" style="left:16.8px;top:148.22px;font-size:3.62px;line-height:4.34px;color:#2a8fa8;font-weight:400;transform:scaleX(0.94);transform-origin:0 50%;">Shop all holiday deals</div>
<div class="x" style="left:91.6px;top:148.22px;font-size:3.62px;line-height:4.34px;color:#2a8fa8;font-weight:400;transform:scaleX(0.94);transform-origin:0 50%;">Explore all deals</div>
<div class="x" style="left:167.2px;top:148.22px;font-size:3.62px;line-height:4.34px;color:#2a8fa8;font-weight:400;transform:scaleX(0.94);transform-origin:0 50%;">See more</div>
<div class="x" style="left:242.8px;top:81.76px;font-size:3.4px;line-height:4.08px;color:#2a8fa8;font-weight:400;transform:scaleX(0.94);transform-origin:0 50%;">Find the perfect gift card</div>
<div style="left:19.6px;top:83.6px;width:26.2px;height:22px;background:#f1e9ea;"></div>
<div style="left:21.4px;top:85px;width:14px;height:6.8px;background:#e98aa0;"></div>
<div style="left:31.4px;top:93px;width:13.2px;height:6.8px;background:#c9d8ee;"></div>
<div style="left:21.4px;top:100.2px;width:18px;height:3.6px;background:#e0566a;"></div>
<div style="left:53px;top:83.6px;width:23px;height:22px;background:#efe9e6;"></div>
<div style="left:54.2px;top:84.6px;width:15.2px;height:9.2px;background:#c65a5a;"></div>
<div style="left:57.4px;top:86.2px;width:8.8px;height:5.6px;background:#7fb4c8;"></div>
<div style="left:55.4px;top:95.8px;width:20px;height:8px;background:#e7d9d0;"></div>
<div style="left:17.4px;top:119px;width:30.4px;height:16.8px;background:#e8433c;border-radius:2px"></div>
<div style="left:21.4px;top:117.8px;width:22px;height:5.2px;background:#f2c230;"></div>
<div style="left:18.2px;top:131px;width:29.2px;height:4.8px;background:#f0b93a;"></div>
<div style="left:28.2px;top:124.6px;width:9.2px;height:6px;background:#4caf50;border-radius:50%"></div>
<div style="left:57.2px;top:115px;width:0;height:0;border-left:7.4px solid transparent;border-right:7.4px solid transparent;border-bottom:21.2px solid #3f7a48"></div>
<div style="left:98.2px;top:83.6px;width:18.8px;height:22px;background:#ededf0;border-radius:45% 45% 40% 40%"></div>
<div style="left:102.6px;top:89px;width:10px;height:14.8px;background:#fff;border-radius:45% 45% 30% 30%"></div>
<div style="left:132.6px;top:83.6px;width:17.6px;height:22px;background:#141c2e;border-radius:1px"></div>
<div style="left:135.4px;top:86.6px;width:12px;height:16px;background:#27407a;"></div>
<div style="left:142.2px;top:89px;width:5.2px;height:5.6px;background:#e8772a;border-radius:50%"></div>
<div style="left:96.2px;top:115.8px;width:11.2px;height:21.2px;background:#2b2d33;"></div>
<div style="left:97.8px;top:118.6px;width:8px;height:15.6px;background:linear-gradient(#6a7a8c,#8fb0a0 50%,#a08cc0);"></div>
<div style="left:114.2px;top:115.8px;width:4.4px;height:21.2px;background:#3a3c42;"></div>
<div style="left:128.2px;top:115.8px;width:8px;height:21.2px;background:#55575e;"></div>
<div style="left:137px;top:115px;width:14.4px;height:22.4px;background:#2a2c31;"></div>
<div style="left:142.6px;top:117.8px;width:7.6px;height:10px;background:#7a8696;"></div>
<div style="left:170.6px;top:85px;width:25.2px;height:19.6px;background:#cfd8e3;border-radius:48%"></div>
<div style="left:173px;top:95px;width:20.4px;height:9.2px;background:#f4f5f7;border-radius:30% 30% 48% 48%"></div>
<div style="left:175.8px;top:88.2px;width:14.8px;height:6.8px;background:#1f2a3a;border-radius:40%"></div>
<div style="left:202.6px;top:87px;width:26.8px;height:16.8px;background:#eeeff1;border-radius:2px"></div>
<div style="left:168.6px;top:121.8px;width:60px;height:10px;background:#2c2c30;border-radius:1.2px"></div>
<div style="left:182.6px;top:121.8px;width:1.2px;height:10px;background:#fff;"></div>
<div style="left:197.8px;top:121.8px;width:1.2px;height:10px;background:#fff;"></div>
<div style="left:213.4px;top:121.8px;width:1.2px;height:10px;background:#fff;"></div>
<div style="left:290.6px;top:81px;width:9.2px;height:16.4px;background:#f2a24a;border-radius:0.8px"></div>
<div style="left:292.6px;top:79px;width:5.2px;height:3.6px;background:#d6214f;border-radius:40%"></div>
<div style="left:244.6px;top:108.6px;width:59.6px;height:30px;background:#f47a20;"></div>
<div style="left:255px;top:112.6px;width:29.2px;height:22px;background:#2d1b5e;border-radius:0.8px"></div>
<div style="left:257.8px;top:115px;width:23.6px;height:16px;background:#7a3fd0;"></div>
<div style="left:284.6px;top:137.8px;width:26px;height:1px;background:#fff;transform:rotate(-40deg);transform-origin:0 0"></div>
<div class="x" style="left:258.2px;top:142.16px;font-size:3.4px;line-height:4.08px;color:#333;font-weight:400;transform:scaleX(0.94);transform-origin:0 50%;">Save on laptop products</div>
<div class="x" style="left:266.6px;top:146.02px;font-size:3.62px;line-height:4.34px;color:#111;font-weight:700;transform:scaleX(0.94);transform-origin:0 50%;">Shop now</div>
<div class="x" style="left:300.6px;top:153.06px;font-size:2.56px;line-height:3.06px;color:#666;font-weight:400;transform:scaleX(0.94);transform-origin:0 50%;">Sponsored</div>
<div style="left:13.2px;top:161px;width:296px;height:14.8px;background:#fff;"></div>
<div class="x" style="left:16.8px;top:165.4px;font-size:4.68px;line-height:5.62px;color:#333;font-weight:700;transform:scaleX(0.94);transform-origin:0 50%;">Top Black Friday categories</div>
<div class="x" style="left:78.6px;top:166.22px;font-size:3.62px;line-height:4.34px;color:#2a8fa8;font-weight:400;transform:scaleX(0.94);transform-origin:0 50%;">Explore all deals</div>
<div style="left:26.2px;top:172.4px;width:22.4px;height:22.2px;background:#eef0f0;border-radius:50%"></div>
<div style="left:69px;top:172.4px;width:22.4px;height:22.2px;background:#eef0f0;border-radius:50%"></div>
<div style="left:111.4px;top:172.4px;width:22.4px;height:22.2px;background:#eef0f0;border-radius:50%"></div>
<div style="left:154.2px;top:172.4px;width:22.4px;height:22.2px;background:#eef0f0;border-radius:50%"></div>
<div style="left:197px;top:172.4px;width:22.4px;height:22.2px;background:#eef0f0;border-radius:50%"></div>
<div style="left:239.4px;top:172.4px;width:22.4px;height:22.2px;background:#eef0f0;border-radius:50%"></div>
<div style="left:282.2px;top:172.4px;width:22.4px;height:22.2px;background:#eef0f0;border-radius:50%"></div>
</div>
<div id="card2"></div>
<div class="bg" style="left:1168.4px;top:106.2px;width:418px;height:33.4px"></div>
<div class="bb act" style="left:1168.4px;top:106.2px;width:71.2px;height:33.4px;line-height:33.4px">By price</div>
<div class="bb" style="left:1239.6px;top:106.2px;width:120px;height:33.4px;line-height:33.4px">By lowest price</div>
<div class="bb" style="left:1359.6px;top:106.2px;width:110px;height:33.4px;line-height:33.4px">By availability</div>
<div class="bb" style="left:1469.6px;top:106.2px;width:116.8px;height:33.4px;line-height:33.4px">Data relevance</div>
<div class="bg" style="left:1074.8px;top:623.8px;width:605.2px;height:33.4px"></div>
<div class="bb act" style="left:1074.8px;top:623.8px;width:92.4px;height:33.4px;line-height:33.4px">Price Index</div>
<div class="bb" style="left:1167.2px;top:623.8px;width:82px;height:33.4px;line-height:33.4px">Repricing</div>
<div class="bb" style="left:1249.2px;top:623.8px;width:57.2px;height:33.4px;line-height:33.4px">Prices</div>
<div class="bb" style="left:1306.4px;top:623.8px;width:92px;height:33.4px;line-height:33.4px">Fluctuation</div>
<div class="bb" style="left:1398.4px;top:623.8px;width:119.4px;height:33.4px;line-height:33.4px">Discount index</div>
<div class="bb" style="left:1517.8px;top:623.8px;width:162.2px;height:33.4px;line-height:33.4px">Data Relevance Index</div>
<svg id="charts" viewBox="0 0 1000 555">
<path d="M419.9 116.6H985.9" stroke="#e6e6e6" stroke-width="0.55" fill="none"/>
<text class="ax" x="411.5" y="118.95" text-anchor="end">4</text>
<path d="M419.9 148.0H985.9" stroke="#e6e6e6" stroke-width="0.55" fill="none"/>
<text class="ax" x="411.5" y="150.35" text-anchor="end">3</text>
<path d="M419.9 179.3H985.9" stroke="#e6e6e6" stroke-width="0.55" fill="none"/>
<text class="ax" x="411.5" y="181.65" text-anchor="end">2</text>
<path d="M419.9 210.6H985.9" stroke="#e6e6e6" stroke-width="0.55" fill="none"/>
<text class="ax" x="411.5" y="212.95" text-anchor="end">1</text>
<path d="M419.9 241.8H985.9" stroke="#c6d1e8" stroke-width="0.7" fill="none"/>
<text class="ax" x="411.5" y="244.15" text-anchor="end">0</text>
<rect x="424.78" y="179.3" width="9.1" height="31.30" fill="#dff1f3"/>
<rect x="424.78" y="210.6" width="9.1" height="31.20" fill="#f7a65d"/>
<rect x="443.65" y="179.3" width="9.1" height="31.30" fill="#dff1f3"/>
<rect x="443.65" y="210.6" width="9.1" height="31.20" fill="#f7a65d"/>
<rect x="462.52" y="179.3" width="9.1" height="31.30" fill="#dff1f3"/>
<rect x="462.52" y="210.6" width="9.1" height="31.20" fill="#f7a65d"/>
<rect x="481.38" y="179.3" width="9.1" height="31.30" fill="#dff1f3"/>
<rect x="481.38" y="210.6" width="9.1" height="31.20" fill="#f7a65d"/>
<rect x="500.25" y="179.3" width="9.1" height="31.30" fill="#dff1f3"/>
<rect x="500.25" y="210.6" width="9.1" height="31.20" fill="#f7a65d"/>
<rect x="519.12" y="179.3" width="9.1" height="31.30" fill="#dff1f3"/>
<rect x="519.12" y="210.6" width="9.1" height="31.20" fill="#f7a65d"/>
<rect x="537.98" y="179.3" width="9.1" height="31.30" fill="#dff1f3"/>
<rect x="537.98" y="210.6" width="9.1" height="31.20" fill="#f7a65d"/>
<rect x="556.85" y="179.3" width="9.1" height="31.30" fill="#dff1f3"/>
<rect x="556.85" y="210.6" width="9.1" height="31.20" fill="#fde3dc"/>
<rect x="575.72" y="179.3" width="9.1" height="31.30" fill="#dff1f3"/>
<rect x="575.72" y="210.6" width="9.1" height="31.20" fill="#f7a65d"/>
<rect x="594.58" y="179.3" width="9.1" height="31.30" fill="#dff1f3"/>
<rect x="594.58" y="210.6" width="9.1" height="31.20" fill="#f7a65d"/>
<rect x="613.45" y="179.3" width="9.1" height="31.30" fill="#dff1f3"/>
<rect x="613.45" y="210.6" width="9.1" height="31.20" fill="#f7a65d"/>
<rect x="632.32" y="179.3" width="9.1" height="31.30" fill="#dff1f3"/>
<rect x="632.32" y="210.6" width="9.1" height="31.20" fill="#f7a65d"/>
<rect x="651.18" y="148.0" width="9.1" height="62.60" fill="#dff1f3"/>
<rect x="651.18" y="210.6" width="9.1" height="31.20" fill="#f7a65d"/>
<rect x="670.05" y="148.0" width="9.1" height="62.60" fill="#dff1f3"/>
<rect x="670.05" y="210.6" width="9.1" height="31.20" fill="#f7a65d"/>
<rect x="688.92" y="179.3" width="9.1" height="31.30" fill="#dff1f3"/>
<rect x="688.92" y="210.6" width="9.1" height="31.20" fill="#f7a65d"/>
<rect x="707.78" y="179.3" width="9.1" height="31.30" fill="#dff1f3"/>
<rect x="707.78" y="210.6" width="9.1" height="31.20" fill="#f7a65d"/>
<rect x="726.65" y="179.3" width="9.1" height="31.30" fill="#dff1f3"/>
<rect x="726.65" y="210.6" width="9.1" height="31.20" fill="#f7a65d"/>
<rect x="745.52" y="179.3" width="9.1" height="31.30" fill="#dff1f3"/>
<rect x="745.52" y="210.6" width="9.1" height="31.20" fill="#f7a65d"/>
<rect x="764.38" y="179.3" width="9.1" height="31.30" fill="#dff1f3"/>
<rect x="764.38" y="210.6" width="9.1" height="31.20" fill="#f7a65d"/>
<rect x="783.25" y="179.3" width="9.1" height="31.30" fill="#dff1f3"/>
<rect x="783.25" y="210.6" width="9.1" height="31.20" fill="#f7a65d"/>
<rect x="802.12" y="179.3" width="9.1" height="31.30" fill="#dff1f3"/>
<rect x="802.12" y="210.6" width="9.1" height="31.20" fill="#fdbd78"/>
<rect x="820.98" y="179.3" width="9.1" height="31.30" fill="#dff1f3"/>
<rect x="820.98" y="210.6" width="9.1" height="31.20" fill="#f7a65d"/>
<rect x="839.85" y="179.3" width="9.1" height="31.30" fill="#dff1f3"/>
<rect x="839.85" y="210.6" width="9.1" height="31.20" fill="#f7a65d"/>
<rect x="858.72" y="148.0" width="9.1" height="62.60" fill="#dff1f3"/>
<rect x="858.72" y="210.6" width="9.1" height="31.20" fill="#f7a65d"/>
<rect x="877.58" y="148.0" width="9.1" height="62.60" fill="#dff1f3"/>
<rect x="877.58" y="210.6" width="9.1" height="31.20" fill="#f7a65d"/>
<rect x="896.45" y="179.3" width="9.1" height="31.30" fill="#dff1f3"/>
<rect x="896.45" y="210.6" width="9.1" height="31.20" fill="#f7a65d"/>
<rect x="915.32" y="179.3" width="9.1" height="31.30" fill="#dff1f3"/>
<rect x="915.32" y="210.6" width="9.1" height="31.20" fill="#f7a65d"/>
<rect x="934.18" y="179.3" width="9.1" height="31.30" fill="#dff1f3"/>
<rect x="934.18" y="210.6" width="9.1" height="31.20" fill="#f7a65d"/>
<rect x="953.05" y="179.3" width="9.1" height="31.30" fill="#dff1f3"/>
<rect x="953.05" y="210.6" width="9.1" height="31.20" fill="#f7a65d"/>
<rect x="971.92" y="179.3" width="9.1" height="31.30" fill="#dff1f3"/>
<rect x="971.92" y="210.6" width="9.1" height="31.20" fill="#f7a65d"/>
<text class="dl" x="428.73" y="175.20" text-anchor="middle">2</text>
<text class="xl" transform="translate(430.63 250.70) rotate(-45)" text-anchor="end">18-12-2024</text>
<text class="dl" x="447.60" y="175.20" text-anchor="middle">2</text>
<text class="xl" transform="translate(449.50 250.70) rotate(-45)" text-anchor="end">19-12-2024</text>
<text class="dl" x="466.47" y="175.20" text-anchor="middle">2</text>
<text class="xl" transform="translate(468.37 250.70) rotate(-45)" text-anchor="end">20-12-2024</text>
<text class="dl" x="485.33" y="175.20" text-anchor="middle">2</text>
<text class="xl" transform="translate(487.23 250.70) rotate(-45)" text-anchor="end">21-12-2024</text>
<text class="dl" x="504.20" y="175.20" text-anchor="middle">2</text>
<text class="xl" transform="translate(506.10 250.70) rotate(-45)" text-anchor="end">22-12-2024</text>
<text class="dl" x="523.07" y="175.20" text-anchor="middle">2</text>
<text class="xl" transform="translate(524.97 250.70) rotate(-45)" text-anchor="end">23-12-2024</text>
<text class="dl" x="541.93" y="175.20" text-anchor="middle">2</text>
<text class="xl" transform="translate(543.83 250.70) rotate(-45)" text-anchor="end">24-12-2024</text>
<text class="dl" x="560.80" y="175.20" text-anchor="middle">2</text>
<text class="xl" transform="translate(562.70 250.70) rotate(-45)" text-anchor="end">25-12-2024</text>
<text class="dl" x="579.67" y="175.20" text-anchor="middle">2</text>
<text class="xl" transform="translate(581.57 250.70) rotate(-45)" text-anchor="end">26-12-2024</text>
<text class="dl" x="598.53" y="175.20" text-anchor="middle">2</text>
<text class="xl" transform="translate(600.43 250.70) rotate(-45)" text-anchor="end">27-12-2024</text>
<text class="dl" x="617.40" y="175.20" text-anchor="middle">2</text>
<text class="xl" transform="translate(619.30 250.70) rotate(-45)" text-anchor="end">28-12-2024</text>
<text class="dl" x="636.27" y="175.20" text-anchor="middle">2</text>
<text class="xl" transform="translate(638.17 250.70) rotate(-45)" text-anchor="end">29-12-2024</text>
<text class="dl" x="655.13" y="143.90" text-anchor="middle">3</text>
<text class="xl" transform="translate(657.03 250.70) rotate(-45)" text-anchor="end">30-12-2024</text>
<text class="dl" x="674.00" y="143.90" text-anchor="middle">3</text>
<text class="xl" transform="translate(675.90 250.70) rotate(-45)" text-anchor="end">31-12-2024</text>
<text class="dl" x="692.87" y="175.20" text-anchor="middle">2</text>
<text class="xl" transform="translate(694.77 250.70) rotate(-45)" text-anchor="end">01-01-2025</text>
<text class="dl" x="711.73" y="175.20" text-anchor="middle">2</text>
<text class="xl" transform="translate(713.63 250.70) rotate(-45)" text-anchor="end">02-01-2025</text>
<text class="dl" x="730.60" y="175.20" text-anchor="middle">2</text>
<text class="xl" transform="translate(732.50 250.70) rotate(-45)" text-anchor="end">03-01-2025</text>
<text class="dl" x="749.47" y="175.20" text-anchor="middle">2</text>
<text class="xl" transform="translate(751.37 250.70) rotate(-45)" text-anchor="end">04-01-2025</text>
<text class="dl" x="768.33" y="175.20" text-anchor="middle">2</text>
<text class="xl" transform="translate(770.23 250.70) rotate(-45)" text-anchor="end">05-01-2025</text>
<text class="dl" x="787.20" y="175.20" text-anchor="middle">2</text>
<text class="xl" transform="translate(789.10 250.70) rotate(-45)" text-anchor="end">06-01-2025</text>
<text class="dl" x="806.07" y="175.20" text-anchor="middle">2</text>
<text class="xl" transform="translate(807.97 250.70) rotate(-45)" text-anchor="end">07-01-2025</text>
<text class="dl" x="824.93" y="175.20" text-anchor="middle">2</text>
<text class="xl" transform="translate(826.83 250.70) rotate(-45)" text-anchor="end">08-01-2025</text>
<text class="dl" x="843.80" y="175.20" text-anchor="middle">2</text>
<text class="xl" transform="translate(845.70 250.70) rotate(-45)" text-anchor="end">09-01-2025</text>
<text class="dl" x="862.67" y="143.90" text-anchor="middle">3</text>
<text class="xl" transform="translate(864.57 250.70) rotate(-45)" text-anchor="end">10-01-2025</text>
<text class="dl" x="881.53" y="143.90" text-anchor="middle">3</text>
<text class="xl" transform="translate(883.43 250.70) rotate(-45)" text-anchor="end">11-01-2025</text>
<text class="dl" x="900.40" y="175.20" text-anchor="middle">2</text>
<text class="xl" transform="translate(902.30 250.70) rotate(-45)" text-anchor="end">12-01-2025</text>
<text class="dl" x="919.27" y="175.20" text-anchor="middle">2</text>
<text class="xl" transform="translate(921.17 250.70) rotate(-45)" text-anchor="end">13-01-2025</text>
<text class="dl" x="938.13" y="175.20" text-anchor="middle">2</text>
<text class="xl" transform="translate(940.03 250.70) rotate(-45)" text-anchor="end">14-01-2025</text>
<text class="dl" x="957.00" y="175.20" text-anchor="middle">2</text>
<text class="xl" transform="translate(958.90 250.70) rotate(-45)" text-anchor="end">15-01-2025</text>
<text class="dl" x="975.87" y="175.20" text-anchor="middle">2</text>
<text class="xl" transform="translate(977.77 250.70) rotate(-45)" text-anchor="end">16-01-2025</text>
<text class="yt" transform="translate(401.0 179.2) rotate(-90)" text-anchor="middle">Products</text>
<text class="ti" x="688.9" y="100.8" text-anchor="middle">Position by price</text>
<rect x="975.2" y="96.2" width="8.8" height="1.4" rx="0.3" fill="#666"/>
<rect x="975.2" y="98.8" width="8.8" height="1.4" rx="0.3" fill="#666"/>
<rect x="975.2" y="101.4" width="8.8" height="1.4" rx="0.3" fill="#666"/>
<circle cx="623.2" cy="291.6" r="3.1" fill="#5bc8d0"/>
<text class="lg" x="630.5" y="294.0">Cheaper</text>
<circle cx="672.8" cy="291.6" r="3.1" fill="#f7a35c"/>
<text class="lg" x="680.2" y="294.0">Expensive</text>
<circle cx="727.6" cy="291.6" r="3.1" fill="#ff8a65"/>
<text class="lg" x="734.7" y="294.0">Highest</text>
<text class="cr" x="985.3" y="303.9" text-anchor="end">Highcharts.com</text>
<path d="M780.0 182.600h54.6a1.300 1.300 0 0 1 1.300 1.300v23.0a1.300 1.300 0 0 1-1.300 1.300h-54.6a1.300 1.300 0 0 1-1.300-1.300v-23.0a1.300 1.300 0 0 1 1.300-1.300z" fill="#000" fill-opacity="0.07"/>
<path d="M779.8 181.600h54.2a1.300 1.300 0 0 1 1.300 1.300v23.2a1.300 1.300 0 0 1-1.300 1.300h-25.000l-3.100 3.100-3.100-3.100h-23.0a1.300 1.300 0 0 1-1.300-1.300v-23.2a1.300 1.300 0 0 1 1.300-1.300z" fill="#f7f7f7" fill-opacity="0.9" stroke="#f5a662" stroke-width="0.7"/>
<text class="tt1" x="782.8" y="191.0">07-01-2025</text>
<circle cx="785.1" cy="197.2" r="2.0" fill="#f7a35c"/>
<text class="tt2" x="789.8" y="199.0">Expensive:</text>
<text class="tt2 b" x="826.2" y="199.0">1</text>
<path d="M427.4 374.9H985.9" stroke="#e6e6e6" stroke-width="0.55" fill="none"/>
<text class="ax" x="419.1" y="377.25" text-anchor="end">160</text>
<path d="M427.4 416.8H985.9" stroke="#e6e6e6" stroke-width="0.55" fill="none"/>
<text class="ax" x="419.1" y="419.15" text-anchor="end">140</text>
<path d="M427.4 458.4H985.9" stroke="#e6e6e6" stroke-width="0.55" fill="none"/>
<text class="ax" x="419.1" y="460.75" text-anchor="end">120</text>
<path d="M427.4 500.1H985.9" stroke="#c6d1e8" stroke-width="0.7" fill="none"/>
<text class="ax" x="419.1" y="502.45" text-anchor="end">100</text>
<polyline points="436.36,403.16 454.98,403.16 473.59,403.16 492.21,401.28 510.83,401.28 529.44,402.33 548.06,401.28 566.67,406.50 585.29,405.46 603.91,401.28 622.52,401.28 641.14,401.28 659.76,418.19 678.38,419.02 696.99,406.50 715.61,409.63 734.23,410.67 752.84,407.54 771.46,410.67 790.08,406.50 808.69,406.50 827.31,401.28 845.92,400.24 864.54,411.30 883.16,411.30 901.78,407.54 920.39,409.63 939.01,401.28 957.62,399.20 976.24,395.02" fill="none" stroke="#ff9eb0" stroke-width="1.05" stroke-linejoin="round"/>
<path d="M436.36 401.06l2.1 2.1-2.1 2.1-2.1-2.1z" fill="#ff9eb0"/>
<path d="M454.98 401.06l2.1 2.1-2.1 2.1-2.1-2.1z" fill="#ff9eb0"/>
<path d="M473.59 401.06l2.1 2.1-2.1 2.1-2.1-2.1z" fill="#ff9eb0"/>
<path d="M492.21 399.18l2.1 2.1-2.1 2.1-2.1-2.1z" fill="#ff9eb0"/>
<path d="M510.83 399.18l2.1 2.1-2.1 2.1-2.1-2.1z" fill="#ff9eb0"/>
<path d="M529.44 400.23l2.1 2.1-2.1 2.1-2.1-2.1z" fill="#ff9eb0"/>
<path d="M548.06 399.18l2.1 2.1-2.1 2.1-2.1-2.1z" fill="#ff9eb0"/>
<path d="M566.67 404.40l2.1 2.1-2.1 2.1-2.1-2.1z" fill="#ff9eb0"/>
<path d="M585.29 403.36l2.1 2.1-2.1 2.1-2.1-2.1z" fill="#ff9eb0"/>
<path d="M603.91 399.18l2.1 2.1-2.1 2.1-2.1-2.1z" fill="#ff9eb0"/>
<path d="M622.52 399.18l2.1 2.1-2.1 2.1-2.1-2.1z" fill="#ff9eb0"/>
<path d="M641.14 399.18l2.1 2.1-2.1 2.1-2.1-2.1z" fill="#ff9eb0"/>
<path d="M659.76 416.09l2.1 2.1-2.1 2.1-2.1-2.1z" fill="#ff9eb0"/>
<path d="M678.38 416.92l2.1 2.1-2.1 2.1-2.1-2.1z" fill="#ff9eb0"/>
<path d="M696.99 404.40l2.1 2.1-2.1 2.1-2.1-2.1z" fill="#ff9eb0"/>
<path d="M715.61 407.53l2.1 2.1-2.1 2.1-2.1-2.1z" fill="#ff9eb0"/>
<path d="M734.23 408.57l2.1 2.1-2.1 2.1-2.1-2.1z" fill="#ff9eb0"/>
<path d="M752.84 405.44l2.1 2.1-2.1 2.1-2.1-2.1z" fill="#ff9eb0"/>
<path d="M771.46 408.57l2.1 2.1-2.1 2.1-2.1-2.1z" fill="#ff9eb0"/>
<path d="M790.08 404.40l2.1 2.1-2.1 2.1-2.1-2.1z" fill="#ff9eb0"/>
<path d="M808.69 404.40l2.1 2.1-2.1 2.1-2.1-2.1z" fill="#ff9eb0"/>
<path d="M827.31 399.18l2.1 2.1-2.1 2.1-2.1-2.1z" fill="#ff9eb0"/>
<path d="M845.92 398.14l2.1 2.1-2.1 2.1-2.1-2.1z" fill="#ff9eb0"/>
<path d="M864.54 409.20l2.1 2.1-2.1 2.1-2.1-2.1z" fill="#ff9eb0"/>
<path d="M883.16 409.20l2.1 2.1-2.1 2.1-2.1-2.1z" fill="#ff9eb0"/>
<path d="M901.78 405.44l2.1 2.1-2.1 2.1-2.1-2.1z" fill="#ff9eb0"/>
<path d="M920.39 407.53l2.1 2.1-2.1 2.1-2.1-2.1z" fill="#ff9eb0"/>
<path d="M939.01 399.18l2.1 2.1-2.1 2.1-2.1-2.1z" fill="#ff9eb0"/>
<path d="M957.62 397.10l2.1 2.1-2.1 2.1-2.1-2.1z" fill="#ff9eb0"/>
<path d="M976.24 392.92l2.1 2.1-2.1 2.1-2.1-2.1z" fill="#ff9eb0"/>
<polyline points="436.36,462.84 454.98,462.84 473.59,460.54 492.21,459.71 510.83,460.75 529.44,461.80 548.06,460.75 566.67,444.89 585.29,460.75 603.91,467.01 622.52,468.06 641.14,469.10 659.76,492.05 678.38,487.88 696.99,458.67 715.61,461.80 734.23,468.06 752.84,473.27 771.46,474.32 790.08,471.19 808.69,465.97 827.31,461.80 845.92,460.75 864.54,480.99 883.16,481.62 901.78,460.75 920.39,460.75 939.01,461.80 957.62,462.84 976.24,460.75" fill="none" stroke="#f9103e" stroke-width="1.1" stroke-linejoin="round"/>
<circle cx="436.36" cy="462.84" r="2.2" fill="#f9103e"/>
<circle cx="454.98" cy="462.84" r="2.2" fill="#f9103e"/>
<circle cx="473.59" cy="460.54" r="2.2" fill="#f9103e"/>
<circle cx="492.21" cy="459.71" r="2.2" fill="#f9103e"/>
<circle cx="510.83" cy="460.75" r="2.2" fill="#f9103e"/>
<circle cx="529.44" cy="461.80" r="2.2" fill="#f9103e"/>
<circle cx="548.06" cy="460.75" r="2.2" fill="#f9103e"/>
<circle cx="566.67" cy="444.89" r="2.2" fill="#f9103e"/>
<circle cx="585.29" cy="460.75" r="2.2" fill="#f9103e"/>
<circle cx="603.91" cy="467.01" r="2.2" fill="#f9103e"/>
<circle cx="622.52" cy="468.06" r="2.2" fill="#f9103e"/>
<circle cx="641.14" cy="469.10" r="2.2" fill="#f9103e"/>
<circle cx="659.76" cy="492.05" r="2.2" fill="#f9103e"/>
<circle cx="678.38" cy="487.88" r="2.2" fill="#f9103e"/>
<circle cx="696.99" cy="458.67" r="2.2" fill="#f9103e"/>
<circle cx="715.61" cy="461.80" r="2.2" fill="#f9103e"/>
<circle cx="734.23" cy="468.06" r="2.2" fill="#f9103e"/>
<circle cx="752.84" cy="473.27" r="2.2" fill="#f9103e"/>
<circle cx="771.46" cy="474.32" r="2.2" fill="#f9103e"/>
<circle cx="790.08" cy="471.19" r="2.2" fill="#f9103e"/>
<circle cx="808.69" cy="465.97" r="2.2" fill="#f9103e"/>
<circle cx="827.31" cy="461.80" r="2.2" fill="#f9103e"/>
<circle cx="845.92" cy="460.75" r="2.2" fill="#f9103e"/>
<circle cx="864.54" cy="480.99" r="2.2" fill="#f9103e"/>
<circle cx="883.16" cy="481.62" r="2.2" fill="#f9103e"/>
<circle cx="901.78" cy="460.75" r="2.2" fill="#f9103e"/>
<circle cx="920.39" cy="460.75" r="2.2" fill="#f9103e"/>
<circle cx="939.01" cy="461.80" r="2.2" fill="#f9103e"/>
<circle cx="957.62" cy="462.84" r="2.2" fill="#f9103e"/>
<circle cx="976.24" cy="460.75" r="2.2" fill="#f9103e"/>
<text class="xl" transform="translate(437.66 509.00) rotate(-45)" text-anchor="end">18-12-2024</text>
<text class="xl" transform="translate(456.28 509.00) rotate(-45)" text-anchor="end">19-12-2024</text>
<text class="xl" transform="translate(474.89 509.00) rotate(-45)" text-anchor="end">20-12-2024</text>
<text class="xl" transform="translate(493.51 509.00) rotate(-45)" text-anchor="end">21-12-2024</text>
<text class="xl" transform="translate(512.12 509.00) rotate(-45)" text-anchor="end">22-12-2024</text>
<text class="xl" transform="translate(530.74 509.00) rotate(-45)" text-anchor="end">23-12-2024</text>
<text class="xl" transform="translate(549.36 509.00) rotate(-45)" text-anchor="end">24-12-2024</text>
<text class="xl" transform="translate(567.97 509.00) rotate(-45)" text-anchor="end">25-12-2024</text>
<text class="xl" transform="translate(586.59 509.00) rotate(-45)" text-anchor="end">26-12-2024</text>
<text class="xl" transform="translate(605.21 509.00) rotate(-45)" text-anchor="end">27-12-2024</text>
<text class="xl" transform="translate(623.82 509.00) rotate(-45)" text-anchor="end">28-12-2024</text>
<text class="xl" transform="translate(642.44 509.00) rotate(-45)" text-anchor="end">29-12-2024</text>
<text class="xl" transform="translate(661.06 509.00) rotate(-45)" text-anchor="end">30-12-2024</text>
<text class="xl" transform="translate(679.67 509.00) rotate(-45)" text-anchor="end">31-12-2024</text>
<text class="xl" transform="translate(698.29 509.00) rotate(-45)" text-anchor="end">01-01-2025</text>
<text class="xl" transform="translate(716.91 509.00) rotate(-45)" text-anchor="end">02-01-2025</text>
<text class="xl" transform="translate(735.52 509.00) rotate(-45)" text-anchor="end">03-01-2025</text>
<text class="xl" transform="translate(754.14 509.00) rotate(-45)" text-anchor="end">04-01-2025</text>
<text class="xl" transform="translate(772.76 509.00) rotate(-45)" text-anchor="end">05-01-2025</text>
<text class="xl" transform="translate(791.38 509.00) rotate(-45)" text-anchor="end">06-01-2025</text>
<text class="xl" transform="translate(809.99 509.00) rotate(-45)" text-anchor="end">07-01-2025</text>
<text class="xl" transform="translate(828.61 509.00) rotate(-45)" text-anchor="end">08-01-2025</text>
<text class="xl" transform="translate(847.22 509.00) rotate(-45)" text-anchor="end">09-01-2025</text>
<text class="xl" transform="translate(865.84 509.00) rotate(-45)" text-anchor="end">10-01-2025</text>
<text class="xl" transform="translate(884.46 509.00) rotate(-45)" text-anchor="end">11-01-2025</text>
<text class="xl" transform="translate(903.08 509.00) rotate(-45)" text-anchor="end">12-01-2025</text>
<text class="xl" transform="translate(921.69 509.00) rotate(-45)" text-anchor="end">13-01-2025</text>
<text class="xl" transform="translate(940.31 509.00) rotate(-45)" text-anchor="end">14-01-2025</text>
<text class="xl" transform="translate(958.92 509.00) rotate(-45)" text-anchor="end">15-01-2025</text>
<text class="xl" transform="translate(977.54 509.00) rotate(-45)" text-anchor="end">16-01-2025</text>
<text class="yt" transform="translate(401.0 437.4) rotate(-90)" text-anchor="middle">Index</text>
<text class="ti" x="688.9" y="359.1" text-anchor="middle">Price Index</text>
<rect x="975.2" y="354.4" width="8.8" height="1.4" rx="0.3" fill="#666"/>
<rect x="975.2" y="357.0" width="8.8" height="1.4" rx="0.3" fill="#666"/>
<rect x="975.2" y="359.6" width="8.8" height="1.4" rx="0.3" fill="#666"/>
<path d="M602.2 550.500h8.600" stroke="#f9103e" stroke-width="1.1"/><circle cx="606.500" cy="550.500" r="2.2" fill="#f9103e"/>
<text class="lg" x="614.1" y="552.9">Price index (average)</text>
<path d="M691.2 550.500h8.600" stroke="#ff9eb0" stroke-width="1.05"/><path d="M695.500 548.4l2.1 2.1-2.1 2.1-2.1-2.1z" fill="#ff9eb0"/>
<text class="lg" x="703.2" y="552.9">Price index (minimum)</text>
</svg>
<div id="chat"></div>
<svg class="ic" style="left:25.6px;top:1064px;width:35.6px;height:29.8px" viewBox="0 0 92 77" stroke="none"><path d="M6 0h44a6 6 0 0 1 6 6v12H34a10 10 0 0 0-10 10v16l-14 0-10 10V6a6 6 0 0 1 6-6z" fill="#fff"/><path d="M36 22h46a6 6 0 0 1 6 6v46l-12-10H36a6 6 0 0 1-6-6V28a6 6 0 0 1 6-6z" fill="#fff"/><circle cx="48" cy="44" r="3" fill="#0b63ce"/><circle cx="59" cy="44" r="3" fill="#0b63ce"/><circle cx="70" cy="44" r="3" fill="#0b63ce"/></svg>
<div id="hdr"></div>
</div>
</div>
</div>
</body>
</html>
